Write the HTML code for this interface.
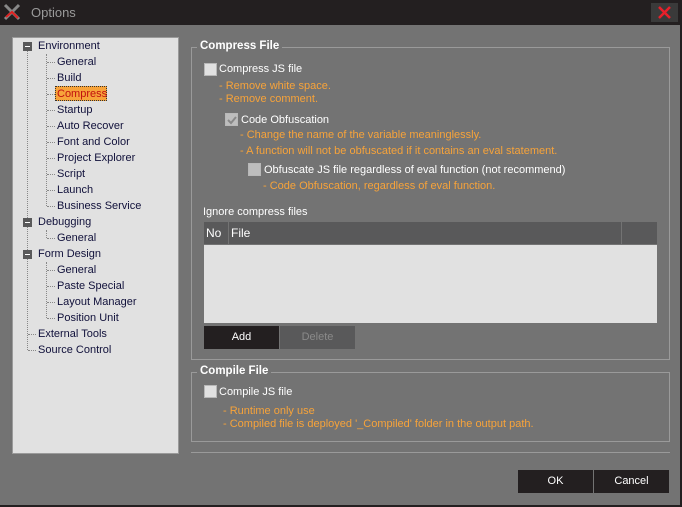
<!DOCTYPE html>
<html><head><style>
*{margin:0;padding:0;box-sizing:border-box}
body{width:682px;height:507px;background:#737373;font-family:"Liberation Sans",sans-serif;font-size:11px;position:relative;overflow:hidden}
.a{position:absolute;white-space:nowrap}
.t{color:#fff}
.o{color:#f7a33a}
.tr{color:#10103a}
.cb{position:absolute;width:13px;height:13px;background:#e1e1e1;border:1px solid #b8b8b8}
.dl{position:absolute;border-left:1px dotted #888}
.dh{position:absolute;border-top:1px dotted #888;width:8px}
.bx{position:absolute;width:9px;height:9px;background:#59595a}
.bx:after{content:"";position:absolute;left:2px;top:4px;width:5px;height:1px;background:#fff}
</style></head><body>
<div class="a" style="left:0;top:0;width:682px;height:25px;background:#231f20"></div>
<svg class="a" style="left:3px;top:3px" width="18" height="18" viewBox="0 0 18 18"><path d="M2 2L16 16M16 2L2 16" stroke="#888" stroke-width="3"/><path d="M3 14L9 9L15 15" stroke="#e02020" stroke-width="2" fill="none"/></svg>
<div class="a" style="left:31px;top:5px;color:#9a9a9a;font-size:13px">Options</div>
<div class="a" style="left:651px;top:3px;width:27px;height:19px;background:#3a3a3a"></div>
<svg class="a" style="left:657px;top:5px" width="15" height="15"><path d="M2 2L13 13M13 2L2 13" stroke="#e8202a" stroke-width="2.5"/></svg>
<div class="a" style="left:680px;top:25px;width:2px;height:482px;background:#231f20"></div>
<div class="a" style="left:0;top:505px;width:682px;height:2px;background:#231f20"></div>

<div class="a" style="left:12px;top:37px;width:167px;height:417px;background:#e1e1e1;border:1px solid #9a9a9a"></div>
<div class="dl" style="left:27px;top:50px;height:300px"></div>
<div class="dl" style="left:46px;top:54px;height:152px"></div>
<div class="dl" style="left:46px;top:230px;height:8px"></div>
<div class="dl" style="left:46px;top:262px;height:56px"></div>
<div class="bx" style="left:23px;top:42px"></div>
<div class="bx" style="left:23px;top:218px"></div>
<div class="bx" style="left:23px;top:250px"></div>
<div class="a tr" style="left:38px;top:40px">Environment</div>
<div class="a tr" style="left:38px;top:216px">Debugging</div>
<div class="a tr" style="left:38px;top:248px">Form Design</div>
<div class="dh" style="left:28px;top:334px"></div><div class="a tr" style="left:38px;top:328px">External Tools</div>
<div class="dh" style="left:28px;top:350px"></div><div class="a tr" style="left:38px;top:344px">Source Control</div>
<div class="dh" style="left:47px;top:62px"></div><div class="a tr" style="left:57px;top:56px">General</div>
<div class="dh" style="left:47px;top:78px"></div><div class="a tr" style="left:57px;top:72px">Build</div>
<div class="dh" style="left:47px;top:94px"></div><div class="a" style="left:55px;top:86px;width:52px;height:15px;background:#f7a33a;border:1px dotted #333"></div><div class="a" style="left:57px;top:88px;color:#c01010">Compress</div>
<div class="dh" style="left:47px;top:110px"></div><div class="a tr" style="left:57px;top:104px">Startup</div>
<div class="dh" style="left:47px;top:126px"></div><div class="a tr" style="left:57px;top:120px">Auto Recover</div>
<div class="dh" style="left:47px;top:142px"></div><div class="a tr" style="left:57px;top:136px">Font and Color</div>
<div class="dh" style="left:47px;top:158px"></div><div class="a tr" style="left:57px;top:152px">Project Explorer</div>
<div class="dh" style="left:47px;top:174px"></div><div class="a tr" style="left:57px;top:168px">Script</div>
<div class="dh" style="left:47px;top:190px"></div><div class="a tr" style="left:57px;top:184px">Launch</div>
<div class="dh" style="left:47px;top:206px"></div><div class="a tr" style="left:57px;top:200px">Business Service</div>
<div class="dh" style="left:47px;top:238px"></div><div class="a tr" style="left:57px;top:232px">General</div>
<div class="dh" style="left:47px;top:270px"></div><div class="a tr" style="left:57px;top:264px">General</div>
<div class="dh" style="left:47px;top:286px"></div><div class="a tr" style="left:57px;top:280px">Paste Special</div>
<div class="dh" style="left:47px;top:302px"></div><div class="a tr" style="left:57px;top:296px">Layout Manager</div>
<div class="dh" style="left:47px;top:318px"></div><div class="a tr" style="left:57px;top:312px">Position Unit</div>

<div class="a" style="left:191px;top:47px;width:479px;height:313px;border:1px solid #9a9a9a"></div>
<div class="a t" style="left:197px;top:40px;background:#737373;padding:0 3px;font-weight:bold;font-size:11.5px">Compress File</div>
<div class="cb" style="left:204px;top:63px"></div><div class="a t" style="left:219px;top:63px">Compress JS file</div>
<div class="a o" style="left:219px;top:80px">- Remove white space.</div>
<div class="a o" style="left:219px;top:93px">- Remove comment.</div>
<div class="cb" style="left:225px;top:113px;background:#bdbdbd"></div><svg class="a" style="left:226px;top:114px" width="12" height="12"><path d="M2 6L5 9L10 3" stroke="#888" stroke-width="2" fill="none"/></svg>
<div class="a t" style="left:241px;top:114px">Code Obfuscation</div>
<div class="a o" style="left:240px;top:129px">- Change the name of the variable meaninglessly.</div>
<div class="a o" style="left:240px;top:145px">- A function will not be obfuscated if it contains an eval statement.</div>
<div class="cb" style="left:248px;top:163px;background:#bdbdbd"></div><div class="a t" style="left:264px;top:164px">Obfuscate JS file regardless of eval function (not recommend)</div>
<div class="a o" style="left:263px;top:180px">- Code Obfuscation, regardless of eval function.</div>
<div class="a t" style="left:203px;top:206px">Ignore compress files</div>
<div class="a" style="left:204px;top:222px;width:453px;height:22px;background:#59595a"></div>
<div class="a" style="left:228px;top:222px;width:1px;height:22px;background:#737373"></div>
<div class="a" style="left:621px;top:222px;width:1px;height:22px;background:#737373"></div>
<div class="a t" style="left:206px;top:226px;font-size:12px">No</div>
<div class="a t" style="left:231px;top:226px;font-size:12px">File</div>
<div class="a" style="left:204px;top:245px;width:453px;height:78px;background:#e1e1e1"></div>
<div class="a t" style="left:204px;top:326px;width:75px;height:23px;background:#231f20;text-align:center;line-height:23px">Add</div>
<div class="a" style="left:280px;top:326px;width:75px;height:23px;background:#59595a;text-align:center;line-height:23px;color:#8a8a8a">Delete</div>

<div class="a" style="left:191px;top:372px;width:479px;height:70px;border:1px solid #9a9a9a"></div>
<div class="a t" style="left:197px;top:365px;background:#737373;padding:0 3px;font-weight:bold;font-size:11.5px">Compile File</div>
<div class="cb" style="left:204px;top:385px"></div><div class="a t" style="left:219px;top:386px">Compile JS file</div>
<div class="a o" style="left:223px;top:405px">- Runtime only use</div>
<div class="a o" style="left:223px;top:418px">- Compiled file is deployed '_Compiled' folder in the output path.</div>
<div class="a" style="left:191px;top:452px;width:479px;height:1px;background:#9a9a9a"></div>
<div class="a t" style="left:518px;top:470px;width:75px;height:23px;background:#231f20;text-align:center;line-height:23px">OK</div>
<div class="a t" style="left:594px;top:470px;width:75px;height:23px;background:#231f20;text-align:center;line-height:23px">Cancel</div>
</body></html>
